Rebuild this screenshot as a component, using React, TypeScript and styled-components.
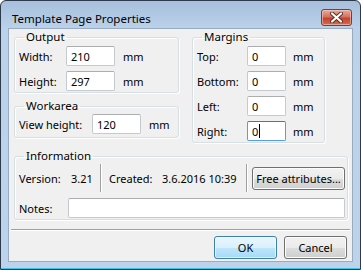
import React from 'react';
import styled, { createGlobalStyle } from 'styled-components';

const GlobalStyle = createGlobalStyle`
  html, body {
    margin: 0;
    padding: 0;
    background: #ffffff;
  }
  body {
    font-family: "Noto Sans", "DejaVu Sans", sans-serif;
    font-size: 11px;
    color: #000;
    white-space: nowrap;
  }
`;

const Window = styled.div`
  box-sizing: border-box;
  width: 361px;
  height: 270px;
  display: flex;
  flex-direction: column;
  border: 1px solid #2c3a4b;
  border-radius: 6px 6px 0 0;
  background: linear-gradient(to bottom, #a7bfdb 0px, #bcd2eb 28px, #bdd3ec 100%);
  box-shadow: inset 0 -1px 0 #3ac6e6;
`;

const TitleBar = styled.div`
  height: 27px;
  display: flex;
  align-items: center;
  justify-content: space-between;
  padding: 0 8px 0 11px;
  flex: none;
`;

const Title = styled.span`
  font-size: 11.5px;
  padding-top: 7px;
`;

const CloseButton = styled.div`
  box-sizing: border-box;
  width: 31px;
  height: 17px;
  margin-top: 5px;
  border: 1px solid #7f3a33;
  border-radius: 3px;
  background: linear-gradient(to bottom, #e9a99c 0%, #d7725f 45%, #c4412f 55%, #d0704e 100%);
  box-shadow: inset 0 0 0 1px rgba(255, 220, 210, 0.5);
  display: flex;
  align-items: center;
  justify-content: center;
`;

const Client = styled.div`
  box-sizing: border-box;
  flex: 1;
  margin: 0 7px 7px 7px;
  border: 1px solid #97abc2;
  background: #f0f0f0;
  padding: 0 5px 0 5px;
  display: flex;
  flex-direction: column;
`;

const TopRow = styled.div`
  display: flex;
  gap: 13px;
  align-items: flex-start;
`;

const Column = styled.div`
  display: flex;
  flex-direction: column;
  gap: 5px;
`;

const Group = styled.fieldset<{ $w: number }>`
  box-sizing: border-box;
  width: ${p => p.$w}px;
  margin: 0;
  padding: 1px 3px 1px 4px;
  border: 1px solid #d5dfe5;
  border-radius: 3px;
  box-shadow: inset 1px 1px 0 #ffffff, 1px 1px 0 #ffffff;
  display: flex;
  flex-direction: column;
  gap: 5px;
  min-width: 0;
`;

const Legend = styled.legend`
  padding: 0 2px;
  margin-left: 5px;
  line-height: 16px;
  height: 16px;
  font-size: 11.5px;
`;

const FieldRow = styled.div`
  display: flex;
  align-items: center;
  height: 20px;
`;

const Label = styled.span<{ $w: number }>`
  width: ${p => p.$w}px;
  flex: none;
`;

const Input = styled.div<{ $w: number; $focus?: boolean }>`
  box-sizing: border-box;
  width: ${p => p.$w}px;
  height: 20px;
  background: #fff;
  border: 1px solid ${p => (p.$focus ? '#569de5' : '#c5cad1')};
  border-top-color: ${p => (p.$focus ? '#3d7bad' : '#abadb3')};
  border-radius: 2px;
  padding: 0 4px;
  display: flex;
  align-items: center;
  flex: none;
`;

const Caret = styled.span`
  display: inline-block;
  width: 1px;
  height: 14px;
  background: #000;
  margin-left: 1px;
`;

const Unit = styled.span<{ $gap: number }>`
  margin-left: ${p => p.$gap}px;
`;

const InfoRow = styled.div`
  display: flex;
  align-items: center;
  height: 28px;
`;

const InfoText = styled.span<{ $w: number; $left?: number }>`
  width: ${p => p.$w}px;
  margin-left: ${p => p.$left ?? 0}px;
  flex: none;
`;

const VSep = styled.div`
  flex: none;
  width: 1px;
  height: 28px;
  background: #a0a0a0;
  box-shadow: 1px 0 0 #ffffff;
`;

const Button = styled.div<{ $w: number; $default?: boolean }>`
  box-sizing: border-box;
  width: ${p => p.$w}px;
  height: 23px;
  border: 1px solid ${p => (p.$default ? '#3c7fb1' : '#707070')};
  border-radius: 3px;
  background: ${p =>
    p.$default
      ? 'linear-gradient(to bottom, #eaf6fd 0%, #d9f0fc 50%, #bee6fd 51%, #a7d9f5 100%)'
      : 'linear-gradient(to bottom, #f2f2f2 0%, #ebebeb 50%, #dddddd 51%, #cfcfcf 100%)'};
  box-shadow: inset 0 0 0 1px ${p => (p.$default ? 'rgba(255,255,255,0.6)' : '#fcfcfc')};
  display: flex;
  align-items: center;
  justify-content: center;
  flex: none;
`;

const HSep = styled.div`
  height: 1px;
  background: #a0a0a0;
  box-shadow: 0 1px 0 #ffffff;
  margin: 9px -3px 0 -3px;
`;

const ButtonRow = styled.div`
  display: flex;
  justify-content: flex-end;
  gap: 7px;
  margin-top: 6px;
`;

function Field({ label, lw, value, iw, unitGap, focus }: {
  label: string; lw: number; value: string; iw: number; unitGap: number; focus?: boolean;
}) {
  return (
    <FieldRow>
      <Label $w={lw}>{label}</Label>
      <Input $w={iw} $focus={focus}>
        {value}
        {focus && <Caret />}
      </Input>
      <Unit $gap={unitGap}>mm</Unit>
    </FieldRow>
  );
}

export default function App() {
  return (
    <>
      <GlobalStyle />
      <Window>
        <TitleBar>
          <Title>Template Page Properties</Title>
          <CloseButton>
            <svg width="13" height="11" viewBox="0 0 13 11">
              <path d="M2 1.5 L11 9.5 M11 1.5 L2 9.5" stroke="#5a2a24" strokeWidth="4" strokeLinecap="round" />
              <path d="M2 1.5 L11 9.5 M11 1.5 L2 9.5" stroke="#ffffff" strokeWidth="2.2" strokeLinecap="round" />
            </svg>
          </CloseButton>
        </TitleBar>
        <Client>
          <TopRow>
            <Column>
              <Group $w={165}>
                <Legend>Output</Legend>
                <Field label="Width:" lw={47} value="210" iw={49} unitGap={8} />
                <Field label="Height:" lw={47} value="297" iw={49} unitGap={8} />
              </Group>
              <Group $w={165} style={{ paddingTop: 0, paddingBottom: 3 }}>
                <Legend>Workarea</Legend>
                <Field label="View height:" lw={73} value="120" iw={49} unitGap={8} />
              </Group>
            </Column>
            <Group $w={133}>
              <Legend>Margins</Legend>
              <Field label="Top:" lw={50} value="0" iw={39} unitGap={7} />
              <Field label="Bottom:" lw={50} value="0" iw={39} unitGap={7} />
              <Field label="Left:" lw={50} value="0" iw={39} unitGap={7} />
              <Field label="Right:" lw={50} value="0" iw={39} unitGap={7} focus />
            </Group>
          </TopRow>
          <Group $w={334} style={{ marginTop: 5, paddingTop: 0, gap: 6 }}>
            <Legend>Information</Legend>
            <InfoRow>
              <InfoText $w={52}>Version:</InfoText>
              <InfoText $w={29}>3.21</InfoText>
              <VSep />
              <InfoText $w={53} $left={8}>Created:</InfoText>
              <InfoText $w={84}>3.6.2016 10:39</InfoText>
              <VSep />
              <Button $w={93} style={{ marginLeft: 5 }}>Free attributes...</Button>
            </InfoRow>
            <FieldRow>
              <Label $w={49}>Notes:</Label>
              <Input $w={277} />
            </FieldRow>
          </Group>
          <HSep />
          <ButtonRow>
            <Button $w={63} $default>OK</Button>
            <Button $w={63}>Cancel</Button>
          </ButtonRow>
        </Client>
      </Window>
    </>
  );
}
